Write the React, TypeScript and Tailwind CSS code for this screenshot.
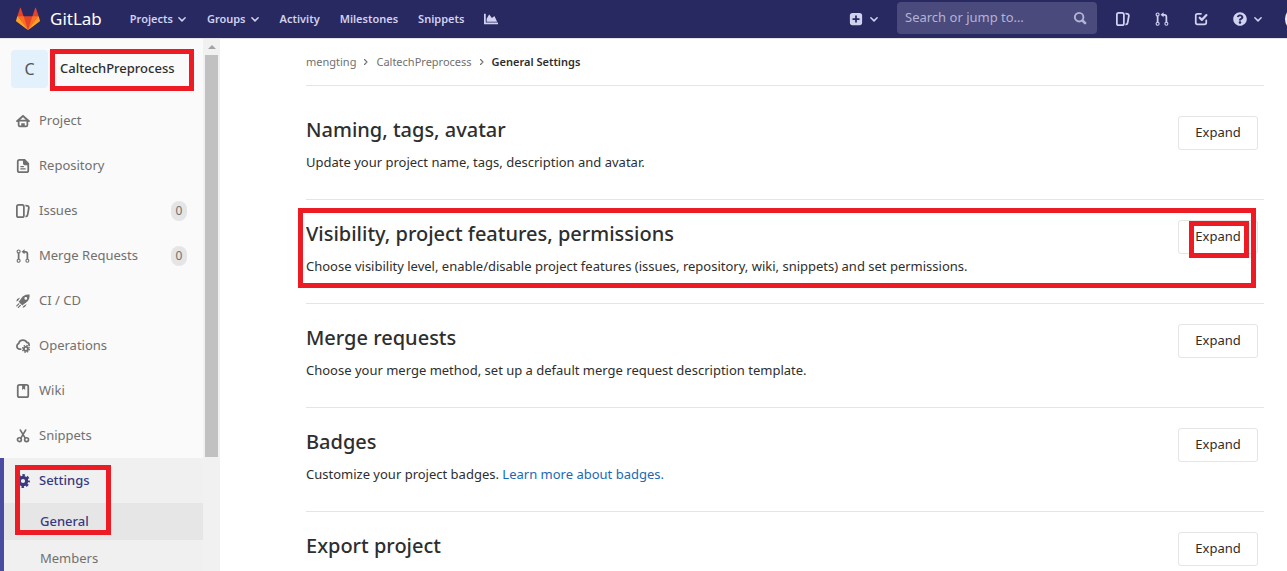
import type { ReactNode } from 'react';
import { FaChartArea, FaQuestionCircle } from 'react-icons/fa';

function Icon({ children, className = 'w-3.5 h-3.5' }: { children: ReactNode; className?: string }) {
  return (
    <svg viewBox="0 0 16 16" fill="currentColor" fillRule="evenodd" className={`shrink-0 ${className}`} aria-hidden="true">
      {children}
    </svg>
  );
}

const Chevron = () => (
  <Icon className="w-2.5 h-2.5">
    <path d="M3 6l5 5 5-5" fill="none" stroke="currentColor" strokeWidth="2.4" strokeLinecap="round" strokeLinejoin="round" />
  </Icon>
);

const CrumbArrow = () => (
  <Icon className="w-2 h-2">
    <path d="M5 3l5 5-5 5" fill="none" stroke="currentColor" strokeWidth="2.2" strokeLinecap="round" strokeLinejoin="round" />
  </Icon>
);

const HomeIcon = () => (
  <Icon>
    <path d="M7.3 1.3a1 1 0 0 1 1.4 0l6.900 6.100a.9.9 0 0 1-.6 1.600H14v3.500a2.500 2.500 0 0 1-2.500 2.500h-7A2.500 2.500 0 0 1 2 12.500V9H1a.9.9 0 0 1-.6-1.600zM8 3.600L4.800 6.500h6.400zM4 8.500v4c0 .3.2.5.5.5H6v-2.500h4V13h1.500c.3 0 .5-.2.5-.5v-4z" />
  </Icon>
);

const DocIcon = () => (
  <Icon>
    <path d="M4 0h6.200l4.800 4.800V13a3 3 0 0 1-3 3H4a3 3 0 0 1-3-3V3a3 3 0 0 1 3-3zm0 2a1 1 0 0 0-1 1v10a1 1 0 0 0 1 1h8a1 1 0 0 0 1-1V7h-3a2 2 0 0 1-2-2V2z" />
    <path d="M5.500 8h3a.5.5 0 0 1 0 1.300h-3a.5.5 0 0 1 0-1.300zm0 2.700h5a.5.5 0 0 1 0 1.300h-5a.5.5 0 0 1 0-1.300z" />
  </Icon>
);

const IssuesIcon = () => (
  <Icon>
    <path d="M10.458 15.012l.311.055a3 3 0 0 0 3.476-2.433l1.389-7.879A3 3 0 0 0 13.200 1.280L11.230.933a3.002 3.002 0 0 0-.824-.031c.364.59.58 1.280.593 2.020l1.854.328a1 1 0 0 1 .811 1.158l-1.389 7.879a1 1 0 0 1-1.158.81l-.118-.02a3.980 3.980 0 0 1-.541 1.935zM3 0h4a3 3 0 0 1 3 3v10a3 3 0 0 1-3 3H3a3 3 0 0 1-3-3V3a3 3 0 0 1 3-3zm0 2a1 1 0 0 0-1 1v10a1 1 0 0 0 1 1h4a1 1 0 0 0 1-1V3a1 1 0 0 0-1-1H3z" />
  </Icon>
);

const MergeIcon = () => (
  <Icon>
    <g fill="none" stroke="currentColor" strokeWidth="1.300">
      <circle cx="3" cy="2.800" r="1.700" />
      <circle cx="3" cy="13.400" r="1.700" />
      <circle cx="13" cy="13.400" r="1.700" />
      <path strokeWidth="2" d="M3 4.500v7.200M13 11.700V5.500a2.300 2.300 0 0 0-2.300-2.300H9" />
    </g>
    <path d="M9.800.3v5.800L6.300 3.200z" />
  </Icon>
);

const RocketIcon = () => (
  <Icon>
    <path d="M15.500.7c-3.700-.5-7 .6-9.600 4.300L4.300 7.300 3 8.900l4.200 4.200 1.600-1.300 2.500-1.700c3.600-2.700 4.600-5.800 4.200-9.400zM11.200 6.700a1.600 1.600 0 1 1 0-3.200 1.600 1.600 0 0 1 0 3.200z" />
    <path d="M4.800 3.900L1.300 5.800.2 8.600l2.100-.9zM12.200 11.300l-1.800 3.400-2.900 1.200.9-2.200z" />
    <path d="M3.200 11.200L.9 13.600M5 13l-2.300 2.300" stroke="currentColor" strokeWidth="1.400" strokeLinecap="round" />
  </Icon>
);

const CloudGearIcon = () => (
  <Icon>
    <path d="M5.300 11.600H4.500A3.400 3.400 0 0 1 1 8.200c0-1.500.9-2.700 2.200-3.200C3.600 2.700 5.500 1.200 8 1.200c2.100 0 3.500 1 4.300 2.700 1.700.2 2.700 1.500 2.700 3.300" fill="none" stroke="currentColor" strokeWidth="2" strokeLinecap="round" />
    <circle cx="11.300" cy="11.300" r="2.300" fill="none" stroke="currentColor" strokeWidth="2.200" />
    <circle cx="11.300" cy="11.300" r="3.900" fill="none" stroke="currentColor" strokeWidth="1.500" strokeDasharray="1.700 1.363" />
  </Icon>
);

const WikiIcon = () => (
  <Icon>
    <path d="M4 0h8a3 3 0 0 1 3 3v10a3 3 0 0 1-3 3H4a3 3 0 0 1-3-3V3a3 3 0 0 1 3-3zm0 2a1 1 0 0 0-1 1v10a1 1 0 0 0 1 1h8a1 1 0 0 0 1-1V3a1 1 0 0 0-1-1h-1.500v4.800L8.800 5.400 7 6.800V2z" />
  </Icon>
);

const ScissorsIcon = () => (
  <Icon>
    <g fill="none" stroke="currentColor" strokeWidth="1.900" strokeLinecap="round">
      <path d="M5 1.200l5.500 9.300M11 1.200L5.500 10.500" />
      <circle cx="3.900" cy="12.200" r="2.200" />
      <circle cx="12.100" cy="12.200" r="2.200" />
    </g>
  </Icon>
);

const GearIcon = () => (
  <Icon>
    <circle cx="8" cy="8" r="4.200" fill="none" stroke="currentColor" strokeWidth="3.600" />
    <circle cx="8" cy="8" r="6.600" fill="none" stroke="currentColor" strokeWidth="2.600" strokeDasharray="2.900 2.284" strokeDashoffset="1.450" />
  </Icon>
);

const TodoIcon = () => (
  <Icon>
    <g fill="none" stroke="currentColor" strokeWidth="2" strokeLinecap="round" strokeLinejoin="round">
      <path d="M8 2H4a2 2 0 0 0-2 2v8a2 2 0 0 0 2 2h8a2 2 0 0 0 2-2V9.500" />
      <path strokeWidth="2.500" d="M6.500 6.500L9 9l5.200-5.500" />
    </g>
  </Icon>
);

const PlusSquareIcon = () => (
  <Icon>
    <path d="M4 1h8a3 3 0 0 1 3 3v8a3 3 0 0 1-3 3H4a3 3 0 0 1-3-3V4a3 3 0 0 1 3-3zm3 3v3H4v2h3v3h2V9h3V7H9V4z" />
  </Icon>
);

const SearchIcon = () => (
  <Icon>
    <circle cx="7" cy="7" r="4.900" fill="none" stroke="currentColor" strokeWidth="2.200" />
    <path d="M10.800 10.800l3 3" stroke="currentColor" strokeWidth="3" strokeLinecap="round" />
  </Icon>
);

function Logo() {
  return (
    <svg viewBox="0 0 36 36" className="w-6 h-6" aria-hidden="true">
      <path fill="#e24329" d="M2 14l9.380 9v-9l-4-12.280c-.205-.632-1.176-.632-1.380 0z" />
      <path fill="#e24329" d="M34 14l-9.380 9v-9l4-12.280c.205-.632 1.176-.632 1.380 0z" />
      <path fill="#e24329" d="M18 34.380L3 14h30z" />
      <path fill="#fc6d26" d="M18 34.380L11.380 14H2l4 11z" />
      <path fill="#fc6d26" d="M18 34.380L24.620 14H34l-4 11z" />
      <path fill="#fca326" d="M2 14L.1 20.160c-.18.565 0 1.200.5 1.560l17.420 12.660z" />
      <path fill="#fca326" d="M34 14l1.900 6.160c.18.565 0 1.200-.5 1.560L18 34.380z" />
    </svg>
  );
}

// red frame drawn over the thing it points at
function Highlight({ className }: { className: string }) {
  return <div className={`absolute z-10 border-[5px] border-[#ed1c24] pointer-events-none ${className}`} />;
}

const sidebarItems = [
  { label: 'Project', icon: <HomeIcon /> },
  { label: 'Repository', icon: <DocIcon /> },
  { label: 'Issues', icon: <IssuesIcon />, count: 0 },
  { label: 'Merge Requests', icon: <MergeIcon />, count: 0 },
  { label: 'CI / CD', icon: <RocketIcon /> },
  { label: 'Operations', icon: <CloudGearIcon /> },
  { label: 'Wiki', icon: <WikiIcon /> },
  { label: 'Snippets', icon: <ScissorsIcon /> },
];

const sections = [
  { title: 'Naming, tags, avatar', text: 'Update your project name, tags, description and avatar.' },
  {
    title: 'Visibility, project features, permissions',
    text: 'Choose visibility level, enable/disable project features (issues, repository, wiki, snippets) and set permissions.',
    highlighted: true,
  },
  { title: 'Merge requests', text: 'Choose your merge method, set up a default merge request description template.' },
  { title: 'Badges', text: 'Customize your project badges.', link: 'Learn more about badges.' },
  { title: 'Export project' },
];

function Header() {
  return (
    <header className="flex items-center h-[38px] shrink-0 pl-4 bg-[#292961] text-[#d1d1f0] overflow-hidden">
      <a href="#" className="flex items-center gap-2.5 text-[17px] leading-6 text-white">
        <Logo />
        GitLab
      </a>
      <nav className="flex items-center gap-5 ml-7 text-[11px] font-semibold">
        <button className="flex items-center gap-1">Projects <Chevron /></button>
        <button className="flex items-center gap-1">Groups <Chevron /></button>
        <a href="#">Activity</a>
        <a href="#">Milestones</a>
        <a href="#">Snippets</a>
        <a href="#" aria-label="Analytics"><FaChartArea className="w-3.5 h-3.5" /></a>
      </nav>
      <div className="flex items-center ml-auto">
        <button className="flex items-center gap-1.5 mr-[18px]" aria-label="New"><PlusSquareIcon /><Chevron /></button>
        <label className="flex items-center w-[200px] h-8 pl-2 pr-2.5 mb-0.5 rounded bg-[#4a4a7c] text-[#b3b3d6]">
          <input type="search" aria-label="Search" placeholder="Search or jump to…" className="flex-1 min-w-0 text-[13px] bg-transparent outline-none placeholder:text-[#b3b3d6]" />
          <SearchIcon />
        </label>
        <div className="flex items-center gap-[25px] ml-[19px]">
          <a href="#" aria-label="Issues"><IssuesIcon /></a>
          <a href="#" aria-label="Merge requests"><MergeIcon /></a>
          <a href="#" aria-label="Todos"><TodoIcon /></a>
          <button className="flex items-center gap-1.5" aria-label="Help"><FaQuestionCircle className="w-3.5 h-3.5" /><Chevron /></button>
        </div>
        <div className="w-6 h-6 ml-[22px] -mr-[22px] rounded-full bg-[#eeeef5]" />
      </div>
    </header>
  );
}

function Sidebar() {
  return (
    <aside className="flex w-[220px] shrink-0 overflow-hidden bg-[#fafafa] text-[13px] text-[#707070]">
      <div className="flex-1 min-w-0">
        <div className="relative flex items-center h-[59px] pl-[11px] gap-3">
          <div className="flex items-center justify-center w-[37px] h-[38px] rounded-sm bg-[#e3f1fc] text-base text-[#555]">C</div>
          <a href="#" className="font-medium text-[#2e2e2e]">CaltechPreprocess</a>
          <Highlight className="left-[50px] top-2.5 w-36 h-[42px]" />
        </div>
        <nav>
          {sidebarItems.map((item) => (
            <a key={item.label} href="#" className="flex items-center gap-[9px] h-[45px] px-4">
              {item.icon}
              <span>{item.label}</span>
              {item.count !== undefined && (
                <span className="flex items-center justify-center w-4 h-5 ml-auto rounded-full bg-[#e5e5e5] text-xs">{item.count}</span>
              )}
            </a>
          ))}
          <div className="relative border-l-4 border-[#4b4ba3] bg-[#f0f0f0]">
            <a href="#" className="flex items-center gap-[9px] h-[45px] pl-3 font-medium text-[#393982]">
              <GearIcon />
              Settings
            </a>
            <a href="#" className="flex items-center h-[37px] pl-9 bg-[#e6e6e6] font-medium text-[#393982]">General</a>
            <a href="#" className="flex items-center h-[37px] pl-9">Members</a>
            <Highlight className="left-[11px] top-[7px] w-24 h-[70px]" />
          </div>
        </nav>
      </div>
      <div className="w-[17px] px-0.5 bg-[#f1f1f1]">
        <div className="flex items-center justify-center h-4">
          <svg viewBox="0 0 8 4" className="w-2 h-1 fill-[#a3a3a3]"><path d="M0 4l4-4 4 4z" /></svg>
        </div>
        <div className="h-[402px] bg-[#c1c1c1]" />
      </div>
    </aside>
  );
}

export default function App() {
  return (
    <div className="flex flex-col h-screen overflow-hidden bg-white font-['Noto_Sans','Open_Sans',sans-serif] text-[#2e2e2e]">
      <Header />
      <div className="flex flex-1 min-h-0 border-t border-[#e5e5e5]">
        <Sidebar />
        <main className="flex-1 min-w-0 pl-[86px] pr-[23px] overflow-hidden">
          <nav className="flex items-center gap-1.5 h-[47px] border-b border-[#e5e5e5] text-[11px] text-[#707070]" aria-label="Breadcrumb">
            <a href="#">mengting</a>
            <CrumbArrow />
            <a href="#">CaltechPreprocess</a>
            <CrumbArrow />
            <a href="#" className="font-semibold text-[#2e2e2e]">General Settings</a>
          </nav>
          <div className="pt-2.5">
            {sections.map((section) => (
              <section key={section.title} className="relative flex items-start justify-between h-[104px] pt-5 border-b border-[#e5e5e5]">
                <div>
                  <h4 className="text-xl leading-7 font-medium">{section.title}</h4>
                  {section.text && (
                    <p className="mt-2 text-[13px] leading-5">
                      {section.text} {section.link && <a href="#" className="text-[#1b69b6]">{section.link}</a>}
                    </p>
                  )}
                </div>
                <div className="relative mr-1.5">
                  <button className="w-20 h-[34px] border border-[#e5e5e5] rounded-[3px] bg-white text-[13px]">Expand</button>
                  {section.highlighted && <Highlight className="left-[11px] top-px w-[60px] h-[37px]" />}
                </div>
                {section.highlighted && <Highlight className="-left-2 right-2 top-2 h-20" />}
              </section>
            ))}
          </div>
        </main>
      </div>
    </div>
  );
}
